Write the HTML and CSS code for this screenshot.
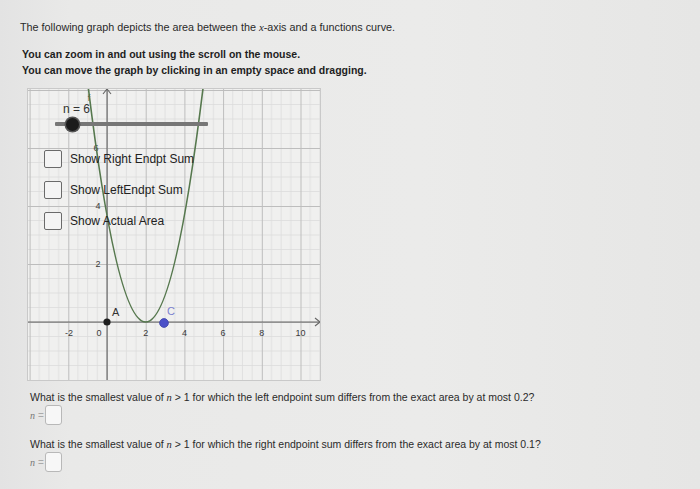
FILE: index.html
```html
<!DOCTYPE html>
<html>
<head>
<meta charset="utf-8">
<link rel="stylesheet" href="styles.css">
</head>
<body>
<div class="page">
  <p class="intro">The following graph depicts the area between the <i class="math">x</i>-axis and a functions curve.</p>
  <div class="hints">
    <p>You can zoom in and out using the scroll on the mouse.</p>
    <p>You can move the graph by clicking in an empty space and dragging.</p>
  </div>
  <div class="graph">
    <svg class="canvas" width="294" height="293" viewBox="0 0 294 293" xmlns="http://www.w3.org/2000/svg">
      <defs>
        <pattern id="grid" patternUnits="userSpaceOnUse" x="80" y="234" width="38.7" height="58">
          <g stroke="#dcdcdc" stroke-width="0.8">
            <line x1="9.675" y1="0" x2="9.675" y2="58"/>
            <line x1="19.35" y1="0" x2="19.35" y2="58"/>
            <line x1="29.025" y1="0" x2="29.025" y2="58"/>
            <line x1="0" y1="14.5" x2="38.7" y2="14.5"/>
            <line x1="0" y1="29" x2="38.7" y2="29"/>
            <line x1="0" y1="43.5" x2="38.7" y2="43.5"/>
          </g>
          <g stroke="#bdbdbd" stroke-width="1">
            <line x1="0.5" y1="0" x2="0.5" y2="58"/>
            <line x1="0" y1="0.5" x2="38.7" y2="0.5"/>
          </g>
        </pattern>
      </defs>
      <rect x="0" y="0" width="294" height="293" fill="#f0f0ef"/>
      <rect x="0" y="0" width="294" height="293" fill="url(#grid)"/>
      <!-- axes -->
      <g stroke="#666" stroke-width="1.1" fill="none">
        <line x1="80" y1="293" x2="80" y2="1"/>
        <polyline points="76,6 80,1 84,6"/>
        <line x1="0" y1="234" x2="293" y2="234"/>
        <polyline points="288,230 293,234 288,238"/>
      </g>
      <!-- axis labels -->
      <g class="ticks" font-size="9" fill="#3a3a3a" text-anchor="middle">
        <text x="42" y="248">-2</text>
        <text x="72" y="248">0</text>
        <text x="118.7" y="248">2</text>
        <text x="157.4" y="248">4</text>
        <text x="196.1" y="248">6</text>
        <text x="234.8" y="248">8</text>
        <text x="273.5" y="248">10</text>
        <text x="71" y="179">2</text>
        <text x="71" y="121">4</text>
        <text x="69" y="63">6</text>
        <text x="62" y="13">f</text>
      </g>
      <!-- function curve -->
      <path d="M59.65,-14 Q118.7,482 177.75,-14" fill="none" stroke="#56784e" stroke-width="1.6"/>
      <!-- points -->
      <circle cx="80" cy="234" r="3.6" fill="#1e1e1e"/>
      <text x="85" y="228" class="plabel" font-size="11" fill="#333">A</text>
      <circle cx="137" cy="235" r="4.4" fill="#4b50c8" stroke="#3a3fa8" stroke-width="0.8"/>
      <text x="140" y="227" class="plabel" font-size="11" fill="#7b7fcf">C</text>
    </svg>

    <div class="slider">
      <span class="slider-label">n = 6</span>
      <div class="slider-track"><span class="slider-knob"></span></div>
    </div>

    <ul class="checks">
      <li><span class="box"></span><span>Show Right Endpt Sum</span></li>
      <li><span class="box"></span><span>Show LeftEndpt Sum</span></li>
      <li><span class="box"></span><span>Show Actual Area</span></li>
    </ul>
  </div>

  <div class="question">
    <p class="q">What is the smallest value of <i class="math">n</i> &gt; 1 for which the left endpoint sum differs from the exact area by at most 0.2?</p>
    <div class="answer"><i class="math">n</i><span class="eq">=</span><span class="input"></span></div>
  </div>
  <div class="question second">
    <p class="q">What is the smallest value of <i class="math">n</i> &gt; 1 for which the right endpoint sum differs from the exact area by at most 0.1?</p>
    <div class="answer"><i class="math">n</i><span class="eq">=</span><span class="input"></span></div>
  </div>
</div>
</body>
</html>
```
FILE: styles.css
```css
* { box-sizing: border-box; }
html, body {
  margin: 0;
  padding: 0;
  width: 700px;
  height: 489px;
  overflow: hidden;
}
body {
  background: linear-gradient(90deg, #e3e3e3 0%, #e9e9e8 10%, #ebebea 60%, #e6e6e5 100%);
  font-family: "Liberation Sans", Arial, sans-serif;
  color: #222;
}
p { margin: 0; }
.page {
  padding: 20px 0 0 20px;
}
.math {
  font-family: "Liberation Serif", "Times New Roman", serif;
  font-style: italic;
}
.intro {
  font-size: 10.8px;
  line-height: 14px;
  color: #2a2a2a;
}
.hints {
  margin-top: 12px;
  margin-left: 2px;
  font-size: 10.5px;
  line-height: 16px;
  font-weight: bold;
  color: #1e1e1e;
}
.graph {
  position: relative;
  width: 294px;
  height: 293px;
  margin-top: 10px;
  margin-left: 7px;
  border: 1px solid #c9c9c9;
  overflow: hidden;
}
.canvas {
  display: block;
  position: absolute;
  left: -1px;
  top: -1px;
}
.ticks, .plabel {
  font-family: "Liberation Sans", Arial, sans-serif;
}
.slider {
  position: absolute;
  left: 27px;
  top: 13px;
  width: 153px;
}
.slider-label {
  display: block;
  margin-left: 8px;
  font-size: 12px;
  line-height: 14px;
  color: #333;
}
.slider-track {
  position: relative;
  margin-top: 6px;
  height: 4px;
  background: #777;
  border-radius: 1px;
}
.slider-knob {
  position: absolute;
  left: 11px;
  top: -4.5px;
  width: 13px;
  height: 13px;
  border-radius: 50%;
  background: #1b1b1b;
  box-shadow: 0 0 0 1.5px #555;
}
.checks {
  position: absolute;
  left: 16px;
  top: 60px;
  margin: 0;
  padding: 0;
  list-style: none;
  display: flex;
  flex-direction: column;
  gap: 12px;
  font-size: 12px;
  color: #222;
}
.checks li {
  display: flex;
  align-items: center;
  gap: 8px;
  height: 19px;
}
.box {
  width: 18px;
  height: 18px;
  border: 1.2px solid #6a6a6a;
  border-radius: 2px;
  background: #f4f4f4;
}
.question {
  margin-top: 10px;
  margin-left: 10px;
  font-size: 10.5px;
  color: #2a2a2a;
}
.question.second {
  margin-top: 13px;
}
.q {
  line-height: 12px;
}
.answer {
  display: flex;
  align-items: center;
  height: 21px;
  padding-top: 1px;
  font-size: 10px;
  color: #777;
}
.answer .eq {
  margin-left: 3px;
  color: #aaa;
}
.input {
  display: inline-block;
  width: 17px;
  height: 20px;
  margin-left: 1px;
  border: 1px solid #b8b8b8;
  border-radius: 3px;
  background: #f7f7f7;
}
```
